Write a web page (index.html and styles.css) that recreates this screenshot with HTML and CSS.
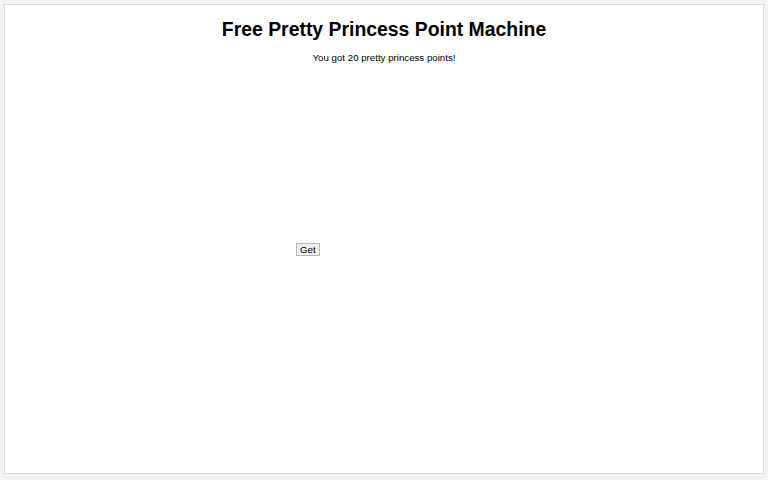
FILE: index.html
```html
<!DOCTYPE html>
<html lang="en">
<head>
    <meta charset="UTF-8">
    <meta name="viewport" content="width=device-width, initial-scale=1.0">
    <title>Free Pretty Princess Point Machine</title>
    <link rel="stylesheet" href="styles.css">
</head>
<body>
    <div id="machine">
        <h1>Free Pretty Princess Point Machine</h1>
        <p id="points">You got 20 pretty princess points!</p>
        <div id="controls">
            <button id="get">Get</button>
        </div>
    </div>
</body>
</html>
```
FILE: styles.css
```css
body {
    font-family: 'Liberation Sans', Arial, sans-serif;
    background-color: #f3f3f3;
    color: #000;
    margin: 0;
    padding: 4px;
    height: 480px;
    box-sizing: border-box;
}

#machine {
    background-color: #fff;
    border: 1px solid #dcdcdc;
    height: 470px;
    box-sizing: border-box;
}

h1 {
    font-size: 19.4px;
    font-weight: bold;
    text-align: center;
    margin: 0;
    padding-top: 13px;
    line-height: 23px;
}

#points {
    font-size: 9.7px;
    text-align: center;
    margin: 0;
    padding-top: 11px;
    line-height: 12px;
}

#controls {
    padding-top: 175px;
    padding-left: 291px;
}

#get {
    font-family: 'Liberation Sans', Arial, sans-serif;
    font-size: 9.7px;
    line-height: 11px;
    padding: 0 3px;
    background-color: #efefef;
    border: 1px solid #b8b8b8;
    border-radius: 0;
    color: #000;
}
```
